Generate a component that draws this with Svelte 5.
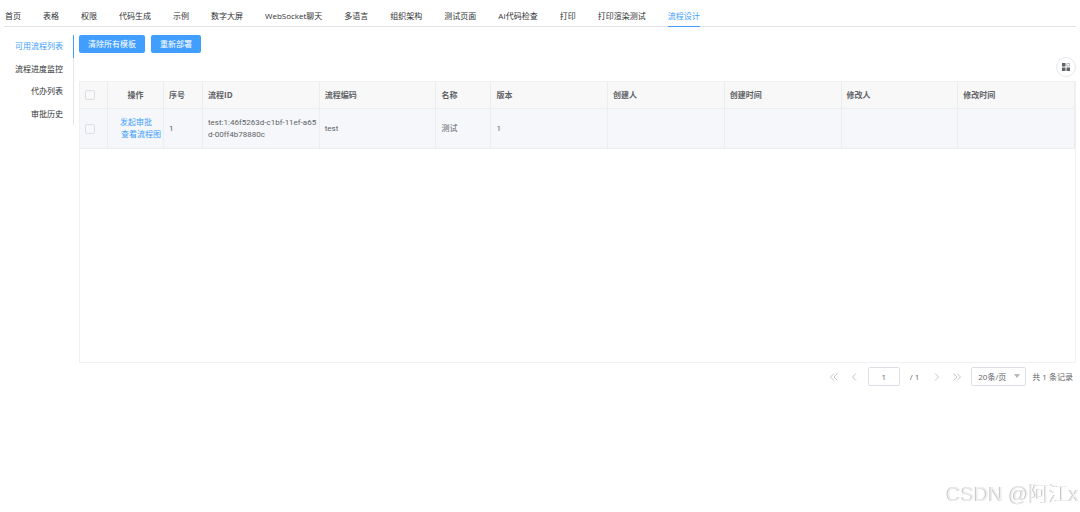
<script>
  const tabs = [
    '首页',
    '表格',
    '权限',
    '代码生成',
    '示例',
    '数字大屏',
    'WebSocket聊天',
    '多语言',
    '组织架构',
    '测试页面',
    'AI代码检查',
    '打印',
    '打印渲染测试',
    '流程设计',
  ];
  const menus = ['可用流程列表', '流程进度监控', '代办列表', '审批历史'];
  const columns = [
    { field: 'id', title: '流程ID' },
    { field: 'key', title: '流程编码' },
    { field: 'name', title: '名称', size: 'name' },
    { field: 'version', title: '版本' },
    { field: 'creator', title: '创建人' },
    { field: 'createTime', title: '创建时间' },
    { field: 'modifier', title: '修改人' },
    { field: 'modifyTime', title: '修改时间' },
  ];
  const rows = [
    {
      id: 'test:1:46f5263d-c1bf-11ef-a65d-00ff4b78880c',
      key: 'test',
      name: '测试',
      version: 1,
    },
  ];

  let activeTab = $state('流程设计');
  let activeMenu = $state('可用流程列表');
  let page = $state(1);
  let pageSize = $state(20);
  let checked = $state([false]);
</script>

<nav class="tabs">
  {#each tabs as tab}
    <button class="tab" class:active={tab === activeTab} onclick={() => (activeTab = tab)}>{tab}</button>
  {/each}
</nav>

<div class="layout">
  <nav class="side">
    {#each menus as menu}
      <button class="side-item" class:active={menu === activeMenu} onclick={() => (activeMenu = menu)}>{menu}</button>
    {/each}
  </nav>

  <main class="content">
    <div class="actions">
      <button class="primary">清除所有模板</button>
      <button class="primary">重新部署</button>
    </div>

    <div class="toolbar">
      <button class="custom" aria-label="列设置">
        <svg viewBox="0 0 8 8" width="8" height="8">
          <path d="M0 0h3.5v3.5H0zM0 4.5h3.5V8H0zM4.5 4.5H8V8H4.5z" fill="#606266" />
          <path d="M4.9.4h2.7v2.7H4.9z" fill="none" stroke="#a5a8ae" stroke-width=".8" />
        </svg>
      </button>
    </div>

    <div class="grid">
      <table>
        <colgroup>
          <col class="col-check" />
          <col class="col-action" />
          <col class="col-seq" />
          {#each columns as column}
            <col class={column.size ? `col-${column.size}` : ''} />
          {/each}
        </colgroup>
        <thead>
          <tr>
            <th class="check"><input type="checkbox" aria-label="全选" /></th>
            <th class="center">操作</th>
            <th>序号</th>
            {#each columns as column}
              <th>{column.title}</th>
            {/each}
          </tr>
        </thead>
        <tbody>
          {#each rows as row, i}
            <tr>
              <td class="check"><input type="checkbox" aria-label="选择" bind:checked={checked[i]} /></td>
              <td class="links">
                <a href="#start">发起审批</a>
                <a class="second" href="#diagram">查看流程图</a>
              </td>
              <td>{i + 1}</td>
              {#each columns as column}
                <td>{row[column.field] ?? ''}</td>
              {/each}
            </tr>
          {/each}
        </tbody>
      </table>
    </div>

    <div class="pager">
      <button class="step" aria-label="首页">
        <svg viewBox="0 0 8 8" width="8" height="8"><path d="M4 .5.5 4 4 7.5M7.5.5 4 4l3.5 3.5" /></svg>
      </button>
      <button class="step" aria-label="上一页">
        <svg viewBox="0 0 8 8" width="8" height="8"><path d="M6 .5 2.5 4 6 7.5" /></svg>
      </button>
      <input class="jump" type="text" aria-label="页码" bind:value={page} />
      <span class="count">/ 1</span>
      <button class="step" aria-label="下一页">
        <svg viewBox="0 0 8 8" width="8" height="8"><path d="M2 .5 5.5 4 2 7.5" /></svg>
      </button>
      <button class="step" aria-label="末页">
        <svg viewBox="0 0 8 8" width="8" height="8"><path d="M.5.5 4 4 .5 7.5M4 .5 7.5 4 4 7.5" /></svg>
      </button>
      <span class="size">
        <select aria-label="每页条数" bind:value={pageSize}>
          <option value={20}>20条/页</option>
          <option value={50}>50条/页</option>
        </select>
        <svg class="caret" viewBox="0 0 6 4" width="6" height="4"><path d="M0 0h6L3 4z" /></svg>
      </span>
      <span>共 1 条记录</span>
    </div>
  </main>
</div>

<div class="watermark">CSDN @阿江x</div>

<style>
  :global(body) {
    background: #fff;
    color: #606266;
    font-family: 'Open Sans', 'Noto Sans CJK SC', sans-serif;
    font-size: 8px;
    line-height: 12px;
  }

  button,
  input,
  select {
    box-sizing: border-box;
    margin: 0;
    padding: 0;
    border: 0;
    background: none;
    color: inherit;
    font: inherit;
  }

  button {
    cursor: pointer;
  }

  svg {
    display: block;
  }

  .tabs {
    display: flex;
    gap: 22px;
    margin: 0 4px;
    padding: 6px 0 0 1px;
    box-shadow: inset 0 -1px #e0e3e9;
  }

  .tab {
    height: 21px;
    border-bottom: 1px solid transparent;
    color: #303133;
    white-space: nowrap;
  }

  .tab.active {
    border-color: #409eff;
    color: #409eff;
  }

  .layout {
    display: flex;
    align-items: flex-start;
    gap: 5px;
    padding: 8px 4px 0 0;
  }

  .side {
    display: grid;
    grid-auto-rows: 1fr;
    flex: none;
    width: 74px;
    height: 90px;
    box-shadow: inset -1px 0 #e4e7ed;
  }

  .side-item {
    padding-right: 10px;
    border-right: 1px solid transparent;
    color: #303133;
    text-align: right;
  }

  .side-item.active {
    border-color: #409eff;
    color: #409eff;
  }

  .content {
    flex: 1;
    min-width: 0;
  }

  .actions {
    display: flex;
    gap: 6px;
  }

  .primary {
    height: 18px;
    padding: 0 9px;
    border-radius: 2px;
    background: #409eff;
    color: #fff;
  }

  .toolbar {
    display: flex;
    justify-content: flex-end;
    padding: 4px 0;
  }

  .custom {
    display: grid;
    place-items: center;
    width: 20px;
    height: 20px;
    border: 1px solid #e4e7ed;
    border-radius: 50%;
  }

  .grid {
    min-height: 280px;
    border: 1px solid #eff0f2;
  }

  table {
    width: 100%;
    border-collapse: separate;
    border-spacing: 0;
    table-layout: fixed;
  }

  .col-check {
    width: 28px;
  }

  .col-action {
    width: 56px;
  }

  .col-seq {
    width: 39px;
  }

  .col-name {
    width: 55px;
  }

  th,
  td {
    box-sizing: border-box;
    padding: 0 0 0 5px;
    border-right: 1px solid #ebedef;
    border-bottom: 1px solid #ebedef;
    text-align: left;
    word-break: break-all;
  }

  th {
    height: 27px;
    background: #f8f8f9;
    font-weight: 700;
  }

  td {
    height: 40px;
    background: #f5f7fa;
    font-family: Roboto, 'Noto Sans CJK SC', sans-serif;
  }

  .center {
    padding: 0;
    text-align: center;
  }

  .check input {
    display: block;
    width: 10px;
    height: 10px;
    border: 1px solid #dcdfe6;
    border-radius: 2px;
    background: transparent;
    appearance: none;
  }

  .check input:checked {
    border-color: #409eff;
    background: #409eff;
  }

  .links {
    padding: 0 0 0 12px;
  }

  a {
    display: block;
    color: #409eff;
    text-decoration: none;
    white-space: nowrap;
  }

  .second {
    padding-left: 1px;
  }

  .pager {
    display: flex;
    align-items: center;
    justify-content: flex-end;
    padding: 4px 3px 0 0;
  }

  .step {
    display: grid;
    place-items: center;
    width: 20px;
    height: 19px;
  }

  .step path {
    fill: none;
    stroke: #b4b8bf;
    stroke-width: 0.8;
  }

  .jump {
    width: 32px;
    height: 19px;
    margin: 0 10px 0 4px;
    border: 1px solid #dcdfe6;
    border-radius: 2px;
    text-align: center;
  }

  .count {
    margin-right: 8px;
  }

  .size {
    position: relative;
    margin: 0 6px 0 4px;
  }

  select {
    display: block;
    width: 55px;
    height: 19px;
    padding-left: 6px;
    border: 1px solid #dcdfe6;
    border-radius: 2px;
    appearance: none;
  }

  .caret {
    position: absolute;
    top: 7px;
    right: 6px;
    fill: #b4b8bf;
    pointer-events: none;
  }

  .watermark {
    position: fixed;
    right: 1px;
    bottom: 4px;
    color: #eee;
    font-family: 'Liberation Sans', 'Noto Sans CJK SC', sans-serif;
    font-size: 20px;
    font-weight: 300;
    line-height: 28px;
    text-shadow: -1px 0 #c4c4c4;
    pointer-events: none;
  }
</style>
